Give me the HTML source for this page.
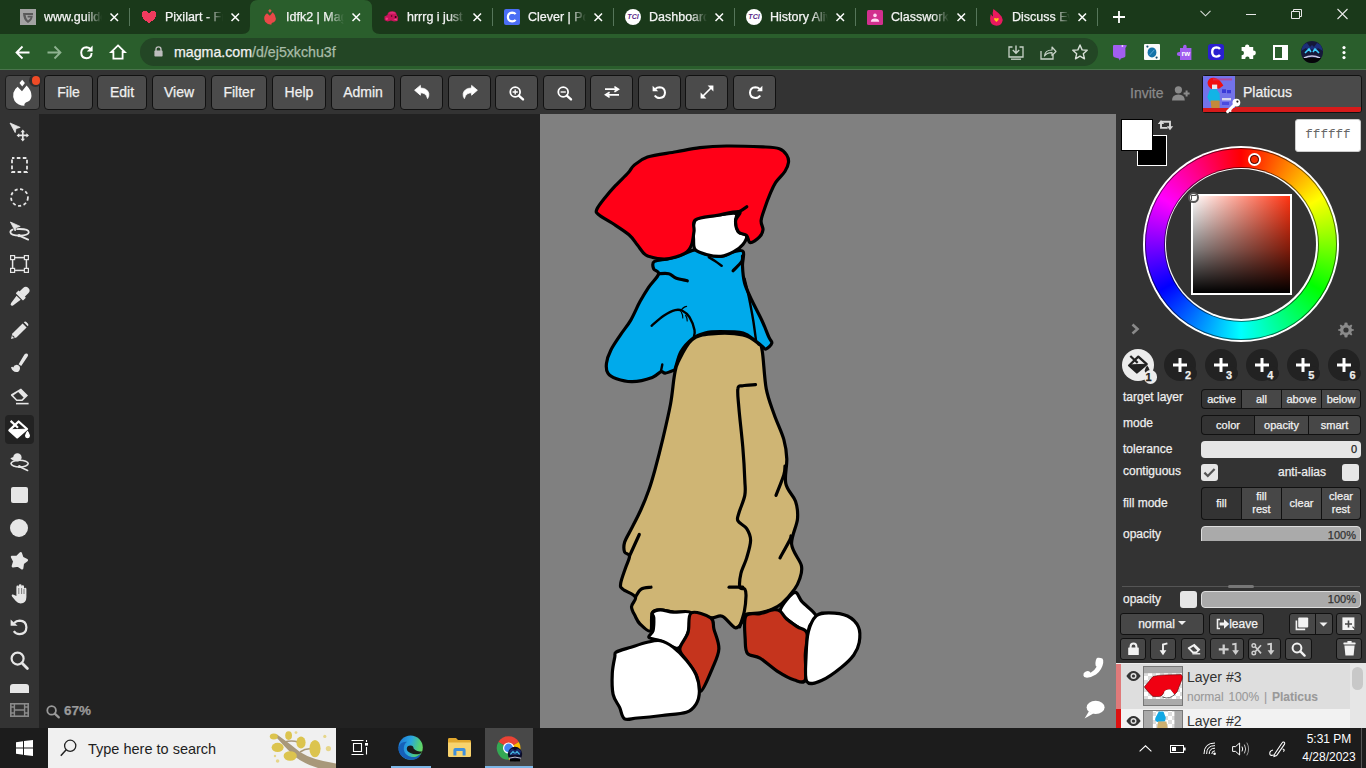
<!DOCTYPE html><html><head><meta charset="utf-8"><style>
*{box-sizing:border-box;margin:0;padding:0}
html,body{width:1366px;height:768px;overflow:hidden;background:#333;font-family:"Liberation Sans",sans-serif;-webkit-text-stroke-width:0.25px}
.a{position:absolute}
svg{position:absolute;overflow:visible}
#tabs{left:0;top:0;width:1366px;height:34px;background:#1a391a}
#tb{left:0;top:34px;width:1366px;height:36px;background:#2a5e2c;border-bottom:1px solid #4a744c}
#omni{left:140px;top:38px;width:958px;height:28px;border-radius:14px;background:#234625}
.tt{position:absolute;top:9px;font-size:12.5px;color:#f4f4f4;white-space:nowrap;overflow:hidden;height:16px;line-height:16px;
 -webkit-mask-image:linear-gradient(90deg,#000 72%,transparent 100%)}
.sep{position:absolute;top:8px;width:1px;height:18px;background:#56765a}
#mtb{left:0;top:70px;width:1366px;height:44px;background:#333}
.btn{position:absolute;top:75px;height:35px;background:#4b4b4b;border:1px solid #111;border-radius:4px;color:#f0f0f0;font-size:14px;line-height:33px;text-align:center}
#left{left:0;top:114px;width:39px;height:614px;background:#333}
#dark{left:39px;top:114px;width:501px;height:614px;background:#222}
#canvas{left:540px;top:114px;width:576px;height:614px;background:#808080;overflow:hidden}
#right{left:1116px;top:114px;width:250px;height:614px;background:#333}
#task{left:0;top:728px;width:1366px;height:40px;background:#1c1c1c}
</style></head><body>
<div id="tabs" class="a"></div>
<svg style="left:242px;top:0" width="138" height="35" viewBox="0 0 138 35"><path d="M0 34 Q8 34 8 26 L8 8 Q8 0 16 0 L122 0 Q130 0 130 8 L130 26 Q130 34 138 34 L138 35 L0 35Z" fill="#2a5e2c"/></svg>
<div class="a" style="left:20px;top:9px"><svg width="16" height="16" viewBox="0 0 16 16"><rect width="16" height="16" fill="#a3a3a3"/><path d="M3 4H13V6H5.6Q6 10 8 11.6Q10 10 10.6 8.6H7.6V6.8H12.8Q12.4 11.6 8 14Q3.2 11.6 3 4Z" fill="#5a5a5a"/></svg></div>
<div class="tt" style="left:44px;width:58px">www.guilded.gg</div>
<svg style="left:110px;top:13px" width="9" height="9"><path d="M0.5 0.5L8 8M8 0.5L0.5 8" stroke="#fff" stroke-width="1.5"/></svg>
<div class="a" style="left:141px;top:10px"><svg width="16" height="14" viewBox="0 0 16 14"><path d="M2 1H6V2H7V3H9V2H10V1H14V2H15V7H14V9H13V10H12V11H10V12H9V13H7V12H6V11H4V10H3V9H2V7H1V2H2Z" fill="#ef3b5e"/></svg></div>
<div class="tt" style="left:165px;width:58px">Pixilart - Free</div>
<svg style="left:231px;top:13px" width="9" height="9"><path d="M0.5 0.5L8 8M8 0.5L0.5 8" stroke="#fff" stroke-width="1.5"/></svg>
<div class="a" style="left:264px;top:9px"><svg width="16" height="16" viewBox="264 9 16 16"><g transform="translate(264 8.9) scale(0.64 0.61) translate(-12.9 -79.8)"><path d="M22.2 79.8L24.9 83L22.2 86.4L19.5 83Z" fill="#e05848"/><path d="M17.6 86.8L22 91.2L26.6 85.4Q31.6 90.4 31.5 96Q31.2 101.4 25.8 102.4Q23.8 103.6 24.4 105.8Q18 105.6 14.6 101Q12.4 97.4 13.4 92.8Q14.6 89 17.6 86.8Z" fill="#ea4848"/></g></svg></div>
<div class="tt" style="left:286px;width:58px">Idfk2 | Magma</div>
<svg style="left:352px;top:13px" width="9" height="9"><path d="M0.5 0.5L8 8M8 0.5L0.5 8" stroke="#fff" stroke-width="1.5"/></svg>
<div class="a" style="left:383px;top:10px"><svg width="16" height="12" viewBox="383 10 16 12"><path d="M387.4 15Q387.6 11.2 392 11.2Q396.4 11.2 396.6 14.6L398.2 17.4L397.6 21L394 21.6L391 20.6L387.6 21.6L384.6 20.2L384.4 16.4Z" fill="#c8145a"/><path d="M388.4 13.4Q390 11.8 392.4 11.8Q395 12 395.8 13.8Z" fill="#e0307a"/><circle cx="391.6" cy="16" r="0.8" fill="#4a0018"/><circle cx="395.6" cy="17" r="1" fill="#2a0010"/><path d="M385.6 18Q387 16.8 388.2 18.4Q387.6 20.4 385.8 19.8Z" fill="#f03a80"/><path d="M393.4 19.8L396.4 18.6L397.2 20.4Z" fill="#e8508a"/></svg></div>
<div class="tt" style="left:407px;width:58px">hrrrg i just want</div>
<svg style="left:473px;top:13px" width="9" height="9"><path d="M0.5 0.5L8 8M8 0.5L0.5 8" stroke="#fff" stroke-width="1.5"/></svg>
<div class="a" style="left:504px;top:9px"><svg width="16" height="16" viewBox="0 0 16 16"><rect width="16" height="16" rx="2" fill="#4b6ef5"/><path d="M11.6 5.2Q10.4 3.6 8.2 3.6Q4 3.8 3.9 8Q4 12.2 8.2 12.4Q10.4 12.4 11.6 10.8" stroke="#fff" stroke-width="2.2" fill="none"/></svg></div>
<div class="tt" style="left:528px;width:58px">Clever | Portal</div>
<svg style="left:594px;top:13px" width="9" height="9"><path d="M0.5 0.5L8 8M8 0.5L0.5 8" stroke="#fff" stroke-width="1.5"/></svg>
<div class="a" style="left:625px;top:9px"><svg width="16" height="16" viewBox="0 0 16 16"><circle cx="8" cy="8" r="8" fill="#fff"/><text x="8" y="10.4" font-family="Liberation Sans" font-size="7" font-weight="bold" font-style="italic" fill="#5a2a8a" text-anchor="middle">TCI</text></svg></div>
<div class="tt" style="left:649px;width:58px">Dashboard</div>
<svg style="left:715px;top:13px" width="9" height="9"><path d="M0.5 0.5L8 8M8 0.5L0.5 8" stroke="#fff" stroke-width="1.5"/></svg>
<div class="a" style="left:746px;top:9px"><svg width="16" height="16" viewBox="0 0 16 16"><circle cx="8" cy="8" r="8" fill="#fff"/><text x="8" y="10.4" font-family="Liberation Sans" font-size="7" font-weight="bold" font-style="italic" fill="#5a2a8a" text-anchor="middle">TCI</text></svg></div>
<div class="tt" style="left:770px;width:58px">History Alive</div>
<svg style="left:836px;top:13px" width="9" height="9"><path d="M0.5 0.5L8 8M8 0.5L0.5 8" stroke="#fff" stroke-width="1.5"/></svg>
<div class="a" style="left:867px;top:10px"><svg width="16" height="15" viewBox="0 0 16 15"><rect width="16" height="15" rx="1.5" fill="#d2308e"/><circle cx="8" cy="5.4" r="1.8" fill="#ffd6f0"/><path d="M3.8 11.8Q4 8.4 8 8.4Q12 8.4 12.2 11.8Z" fill="#ffd6f0"/></svg></div>
<div class="tt" style="left:891px;width:58px">Classwork for</div>
<svg style="left:957px;top:13px" width="9" height="9"><path d="M0.5 0.5L8 8M8 0.5L0.5 8" stroke="#fff" stroke-width="1.5"/></svg>
<div class="a" style="left:990px;top:9px"><svg width="13" height="17" viewBox="0 0 13 17"><path d="M3.4 0Q9 4 11.6 7.6Q13.4 10.6 12 13.6Q10.4 16.8 6.4 16.8Q1.6 16.6 0.4 12.6Q-0.4 9 0.8 5Q2 7 3 7.6Q2.2 3.6 3.4 0Z" fill="#e8195e"/><path d="M6.4 13Q3.6 11 4 9.6Q4.6 8.4 6.4 9.4Q8.2 8.4 8.8 9.6Q9.2 11 6.4 13Z" fill="#ffbf1a"/></svg></div>
<div class="tt" style="left:1012px;width:58px">Discuss Everything</div>
<svg style="left:1078px;top:13px" width="9" height="9"><path d="M0.5 0.5L8 8M8 0.5L0.5 8" stroke="#fff" stroke-width="1.5"/></svg>
<div class="sep" style="left:129px"></div>
<div class="sep" style="left:492px"></div>
<div class="sep" style="left:613px"></div>
<div class="sep" style="left:734px"></div>
<div class="sep" style="left:855px"></div>
<div class="sep" style="left:976px"></div>
<div class="sep" style="left:1097px"></div>
<svg style="left:1113px;top:11px" width="12" height="12"><path d="M6 0V12M0 6H12" stroke="#fff" stroke-width="1.8"/></svg>
<svg style="left:1200px;top:10px" width="11" height="7"><path d="M0.5 0.8L5.5 5.8L10.5 0.8" stroke="#d6dcd6" stroke-width="1.1" fill="none"/></svg>
<div class="a" style="left:1246px;top:14px;width:10px;height:1px;background:#e8e8e8"></div>
<svg style="left:1291px;top:9px" width="11" height="10"><path d="M0.5 2.5H8.5V9.5H0.5Z M2.5 2.5V0.5H10.5V7.5H8.5" stroke="#e8e8e8" stroke-width="1" fill="none"/></svg>
<svg style="left:1337px;top:9px" width="11" height="10"><path d="M0.5 0L10.5 10M10.5 0L0.5 10" stroke="#e8e8e8" stroke-width="1.1"/></svg>
<div id="tb" class="a"></div><div id="omni" class="a"></div>
<svg style="left:15px;top:45px" width="15" height="15"><path d="M14.5 7.5H1.5M7.5 1.5L1.5 7.5L7.5 13.5" stroke="#fff" stroke-width="1.8" fill="none"/></svg>
<svg style="left:47px;top:45px" width="15" height="15"><path d="M0.5 7.5H13.5M7.5 1.5L13.5 7.5L7.5 13.5" stroke="#8fb391" stroke-width="1.8" fill="none"/></svg>
<svg style="left:79px;top:45px" width="15" height="15"><path d="M12.6 8Q12.4 13 7.5 13.2Q2.4 13 2.2 7.6Q2.4 2.4 7.5 2.2Q10.2 2.2 12 4.6" stroke="#fff" stroke-width="1.9" fill="none"/><path d="M13.6 0.6V6.4H7.8Z" fill="#fff"/></svg>
<svg style="left:110px;top:44px" width="16" height="16"><path d="M8 1.4L14.8 8H12.6V14.6H3.4V8H1.2Z" stroke="#fff" stroke-width="1.8" fill="none" stroke-linejoin="miter"/></svg>
<svg style="left:154px;top:46px" width="9" height="11"><path d="M2 5V3.4Q2 0.9 4.5 0.9Q7 0.9 7 3.4V5" stroke="#bdbdbd" stroke-width="1.4" fill="none"/><rect x="0.4" y="4.6" width="8.2" height="6" rx="0.8" fill="#bdbdbd"/></svg>
<div class="a" style="left:174px;top:44px;font-size:14.2px;line-height:17px;color:#f2f2f2;white-space:nowrap">magma.com<span style="color:#a9bca9">/d/ej5xkchu3f</span></div>
<svg style="left:1008px;top:45px" width="16" height="15"><path d="M4.5 2H1V12H15V2H11.5" stroke="#c7d2c7" stroke-width="1.3" fill="none"/><path d="M8 0.5V8M4.8 5L8 8.2L11.2 5" stroke="#c7d2c7" stroke-width="1.4" fill="none"/><path d="M3 14.2H13" stroke="#c7d2c7" stroke-width="1.3"/></svg>
<svg style="left:1040px;top:45px" width="17" height="15"><path d="M1 6V14H13V10" stroke="#c7d2c7" stroke-width="1.3" fill="none"/><path d="M4.5 11Q5 5 12 5V2L16 6.5L12 10.5V7.6Q7 7.4 4.5 11Z" stroke="#c7d2c7" stroke-width="1.2" fill="none" stroke-linejoin="round"/></svg>
<svg style="left:1072px;top:44px" width="16" height="16"><path d="M8 1L10.1 5.9L15.2 6.3L11.3 9.7L12.5 14.8L8 12.1L3.5 14.8L4.7 9.7L0.8 6.3L5.9 5.9Z" stroke="#d8e0d8" stroke-width="1.4" fill="none" stroke-linejoin="round"/></svg>
<svg style="left:1112px;top:43px" width="16" height="18"><path d="M1 3Q1 2 2 2H13L15 2.4L13.4 5V13Q13.4 14.4 12 14.6L8.8 15.6L7.8 17.4L6.8 15.6L3 14.6Q1 14 1 12Z" fill="#a15ef0"/><circle cx="10.4" cy="3" r="0.9" fill="#f6d8ff"/></svg>
<svg style="left:1144px;top:44px" width="16" height="16"><rect width="16" height="16" rx="1" fill="#fafafa"/><ellipse cx="8" cy="8.4" rx="4.4" ry="5" fill="#1572a8"/><path d="M5.6 11L10.4 5.8" stroke="#6fb6e6" stroke-width="0.8"/><circle cx="3.4" cy="2.6" r="1.1" fill="#1a4d6e"/><circle cx="12.6" cy="13.6" r="1.1" fill="#1a4d6e"/></svg>
<svg style="left:1176px;top:44px" width="17" height="16"><path d="M4 4H7Q7 0.6 9.2 0.8Q11 1 10.6 4H15.4V16H4V12Q1 12.4 0.8 10Q1 7.6 4 8Z" fill="#a15ef0"/><text x="9.8" y="12.2" font-family="Liberation Sans" font-size="7.5" font-weight="bold" fill="#fff" text-anchor="middle">rw</text></svg>
<svg style="left:1208px;top:44px" width="16" height="16"><rect width="16" height="16" rx="3" fill="#2a1fd0"/><path d="M12 5Q10.8 3.4 8.4 3.4Q4.2 3.6 4.2 8Q4.2 12.4 8.4 12.6Q10.8 12.6 12 11" stroke="#fff" stroke-width="2.4" fill="none"/></svg>
<svg style="left:1240px;top:44px" width="16" height="16"><path d="M5 3Q5 0.4 7.4 0.6Q9.6 0.8 9.4 3H13.2V6.6Q15.8 6.6 15.8 9Q15.8 11.4 13.2 11.4V15H9.6Q9.6 12.6 7.4 12.6Q5.2 12.6 5.2 15H1.6V11.2Q4 11.2 4 9Q4 6.8 1.6 6.8V3Z" fill="#fff"/></svg>
<svg style="left:1273px;top:45px" width="15" height="15"><rect x="1" y="1" width="13" height="13" stroke="#fff" stroke-width="2" fill="none"/><rect x="9" y="1" width="5" height="13" fill="#fff"/></svg>
<svg style="left:1301px;top:41px" width="22" height="22"><defs><clipPath id="av"><circle cx="11" cy="11" r="11"/></clipPath></defs><g clip-path="url(#av)"><rect width="22" height="22" fill="#15183a"/><path d="M2 4L6 2L9 6L11 4L13 6L16 2L20 4L22 10L17 7L14 10L11 8L8 10L5 7L0 10Z" fill="#1c2f7a"/><path d="M4 12L8 8L10 11M18 12L14 8L12 11" stroke="#3fd0ff" stroke-width="1.6" fill="none"/><path d="M3 17Q11 13 19 17" stroke="#c8c8e8" stroke-width="1.4" fill="none"/><rect y="17" width="22" height="5" fill="#050508"/></g></svg>
<svg style="left:1342px;top:46px" width="4" height="14"><circle cx="2" cy="1.6" r="1.6" fill="#fff"/><circle cx="2" cy="6.6" r="1.6" fill="#fff"/><circle cx="2" cy="11.6" r="1.6" fill="#fff"/></svg>
<div id="mtb" class="a"></div>
<div class="a" style="left:5px;top:75px;width:35px;height:35px;background:#4a4a4a;border:1px solid #1c1c1c;border-radius:4px"></div>
<svg style="left:4px;top:72px" width="42" height="40" viewBox="4 72 42 40"><path d="M22.2 79.8L24.9 83L22.2 86.4L19.5 83Z" fill="#fff"/><path d="M17.6 86.8L22 91.2L26.6 85.4Q31.6 90.4 31.5 96Q31.2 101.4 25.8 102.4Q23.8 103.6 24.4 105.8Q18 105.6 14.6 101Q12.4 97.4 13.4 92.8Q14.6 89 17.6 86.8Z" fill="#fff"/></svg>
<div class="a" style="left:29.4px;top:73.8px;width:13px;height:13px;border-radius:50%;background:#2e2e2e"></div>
<div class="a" style="left:31.6px;top:76px;width:8.6px;height:8.6px;border-radius:50%;background:#ef4b26"></div>
<div class="btn" style="left:44px;width:49px">File</div>
<div class="btn" style="left:97px;width:50px">Edit</div>
<div class="btn" style="left:152px;width:54px">View</div>
<div class="btn" style="left:211px;width:56px">Filter</div>
<div class="btn" style="left:272px;width:54px">Help</div>
<div class="btn" style="left:331px;width:64px">Admin</div>
<div class="btn" style="left:400px;width:43px"></div>
<div class="btn" style="left:448px;width:43px"></div>
<div class="btn" style="left:495px;width:43px"></div>
<div class="btn" style="left:543px;width:43px"></div>
<div class="btn" style="left:590px;width:43px"></div>
<div class="btn" style="left:638px;width:43px"></div>
<div class="btn" style="left:685px;width:43px"></div>
<div class="btn" style="left:733px;width:43px"></div>
<svg style="left:414px;top:85px" width="16" height="14" viewBox="0 0 16 14"><path d="M0.6 5.2L6.4 0.4V3Q13.6 3.2 14.8 8.6Q15.2 11.4 13.6 13.6Q13 10 10.2 8.6Q8.4 7.8 6.4 7.8V10.2Z" fill="#fff" stroke="#fff" stroke-width="0.8" stroke-linejoin="round"/></svg>
<svg style="left:462px;top:85px" width="16" height="14" viewBox="0 0 16 14"><g transform="translate(16 0) scale(-1 1)"><path d="M0.6 5.2L6.4 0.4V3Q13.6 3.2 14.8 8.6Q15.2 11.4 13.6 13.6Q13 10 10.2 8.6Q8.4 7.8 6.4 7.8V10.2Z" fill="#fff" stroke="#fff" stroke-width="0.8" stroke-linejoin="round"/></g></svg>
<svg style="left:509px;top:86px" width="16" height="14" viewBox="0 0 16 14"><circle cx="6.2" cy="6" r="4.9" stroke="#fff" stroke-width="1.8" fill="none"/><path d="M9.8 9.6L14 13.4" stroke="#fff" stroke-width="2.4" stroke-linecap="round"/><path d="M6.2 3.4V8.6M3.6 6H8.8" stroke="#fff" stroke-width="1.4"/></svg>
<svg style="left:557px;top:86px" width="16" height="14" viewBox="0 0 16 14"><circle cx="6.2" cy="6" r="4.9" stroke="#fff" stroke-width="1.8" fill="none"/><path d="M9.8 9.6L14 13.4" stroke="#fff" stroke-width="2.4" stroke-linecap="round"/><path d="M3.6 6H8.8" stroke="#fff" stroke-width="1.4"/></svg>
<svg style="left:604px;top:86px" width="16" height="12" viewBox="0 0 16 12"><path d="M1 3.2H12.6M10.4 0.6L14.4 3.2L10.4 5.8" stroke="#fff" stroke-width="1.7" fill="none"/><path d="M15 8.8H3.4M5.6 6.2L1.6 8.8L5.6 11.4" stroke="#fff" stroke-width="1.7" fill="none"/></svg>
<svg style="left:652px;top:85px" width="15" height="15" viewBox="0 0 15 15"><path d="M3.4 4Q5 2.2 7.6 2.2Q12.8 2.4 13 7.6Q12.8 12.8 7.6 13Q4.4 13 2.8 10.4" stroke="#fff" stroke-width="2" fill="none"/><path d="M0.6 0.8L6.2 6.2H0.6Z" fill="#fff"/></svg>
<svg style="left:700px;top:85px" width="14" height="14" viewBox="0 0 14 14"><path d="M3 11L11 3" stroke="#fff" stroke-width="1.7"/><path d="M7.6 0.6H13.4V6.4Z M0.6 7.6V13.4H6.4Z" fill="#fff"/></svg>
<svg style="left:748px;top:85px" width="15" height="15" viewBox="0 0 15 15"><g transform="translate(15 0) scale(-1 1)"><path d="M3.4 4Q5 2.2 7.6 2.2Q12.8 2.4 13 7.6Q12.8 12.8 7.6 13Q4.4 13 2.8 10.4" stroke="#fff" stroke-width="2" fill="none"/><path d="M0.6 0.8L6.2 6.2H0.6Z" fill="#fff"/></g></svg>
<div id="left" class="a"></div><div id="dark" class="a"></div>
<div class="a" style="left:5px;top:415px;width:29px;height:29px;border-radius:4px;background:#222"></div>
<svg style="left:0;top:0" width="40" height="150" viewBox="0 0 40 150"><path d="M10 123L20.2 127.4L16 128.6L15.2 132.6Z" fill="#e6e6e6" stroke="#e6e6e6" stroke-width="0.8" stroke-linejoin="round"/><path d="M22.8 131.4V139.6M18.2 135.4H27.4" stroke="#e6e6e6" stroke-width="1.7"/><path d="M22.8 129.6L25 132.2H20.6Z M22.8 141.4L25 138.8H20.6Z M16.6 135.4L19.2 133.2V137.6Z M29 135.4L26.4 133.2V137.6Z" fill="#e6e6e6"/></svg>
<svg style="left:11px;top:157px" width="17" height="16" viewBox="0 0 17 16"><rect x="1" y="1" width="15" height="14" stroke="#e6e6e6" stroke-width="1.8" fill="none" stroke-dasharray="3.6 2.4" stroke-dashoffset="1.2"/></svg>
<svg style="left:10px;top:188px" width="19" height="19" viewBox="0 0 19 19"><circle cx="9.5" cy="9.5" r="8.4" stroke="#e6e6e6" stroke-width="1.8" fill="none" stroke-dasharray="3.2 2.5"/></svg>
<svg style="left:0;top:0" width="40" height="250" viewBox="0 0 40 250"><path d="M10.4 222L20.2 226.4L16 227.6L15.2 231Z" fill="#e6e6e6" stroke="#e6e6e6" stroke-width="0.8" stroke-linejoin="round"/><path d="M12.6 229.6Q10.2 230.6 10.4 232.4Q10.8 235.4 19.6 235.6Q28.6 235.4 28.8 232.2Q28.6 229 19.6 229Q18 229 17.2 229.2" stroke="#e6e6e6" stroke-width="1.8" fill="none" stroke-linecap="round"/><circle cx="19.1" cy="235.6" r="1.7" fill="#e6e6e6"/><path d="M19.1 235.6L28.2 239.6" stroke="#e6e6e6" stroke-width="1.7" stroke-linecap="round"/></svg>
<svg style="left:10px;top:255px" width="19" height="18" viewBox="0 0 19 18"><rect x="2.6" y="2.6" width="13.8" height="12.8" stroke="#e6e6e6" stroke-width="1.5" fill="none"/><rect x="0.6" y="0.6" width="4" height="4" fill="#333" stroke="#e6e6e6" stroke-width="1.2"/><rect x="14.4" y="0.6" width="4" height="4" fill="#333" stroke="#e6e6e6" stroke-width="1.2"/><rect x="0.6" y="13.4" width="4" height="4" fill="#333" stroke="#e6e6e6" stroke-width="1.2"/><rect x="14.4" y="13.4" width="4" height="4" fill="#333" stroke="#e6e6e6" stroke-width="1.2"/></svg>
<svg style="left:0;top:0" width="40" height="320" viewBox="0 0 40 320"><g transform="translate(19.6 296.7) rotate(45)"><path d="M-3.7 -3.2V-8.6Q-3.7 -12.4 0 -12.4Q3.7 -12.4 3.7 -8.6V-3.2Z" fill="#e6e6e6"/><rect x="-5.2" y="-3.8" width="10.4" height="4.2" rx="0.8" fill="#e6e6e6"/><path d="M-2.9 1.4H2.9L1.6 10.4Q1.2 12.2 0 12.2Q-1.2 12.2 -1.6 10.4Z" fill="#e6e6e6"/></g></svg>
<svg style="left:10px;top:321px" width="19" height="19" viewBox="0 0 19 19"><path d="M1 18L2.4 12.6L12.6 2.4L16.6 6.4L6.4 16.6Z" fill="#e6e6e6"/><path d="M13.8 1.2Q15.2 -0.2 16.6 1.2L17.8 2.4Q19.2 3.8 17.8 5.2Z" fill="#e6e6e6"/><path d="M2.4 14.6L4.4 16.6" stroke="#333" stroke-width="1.1"/></svg>
<svg style="left:10px;top:353px" width="19" height="20" viewBox="0 0 19 20"><path d="M8.6 11.2L14.4 1.4Q16 -0.2 17.4 0.8Q18.8 2 17.6 3.6L11.2 13Z" fill="#e6e6e6"/><path d="M1 14.6Q2 13 3.2 14.4Q4 12 6.8 11.8Q10.2 12.4 10 15.4Q9.6 19 6.2 19Q2.6 19 1 14.6Z" fill="#e6e6e6"/></svg>
<svg style="left:10px;top:388px" width="19" height="17" viewBox="0 0 19 17"><path d="M11 0.6L18 7.4L12.4 13H6.4L1.2 7.8Q0.4 7 1.2 6.2Z" fill="#e6e6e6"/><path d="M3.2 7.6L7 11.4H11.6L13.6 9.4L8.2 4Z" fill="#333"/><path d="M6 15.6H18.6" stroke="#e6e6e6" stroke-width="1.6"/></svg>
<svg style="left:0;top:0" width="40" height="450" viewBox="0 0 40 450"><path d="M10.6 420.9L18 427.8" stroke="#fff" stroke-width="2.2"/><path d="M18.6 421.5L27 429L17.2 437.4L9.4 430.4Z" stroke="#fff" stroke-width="2.3" stroke-linejoin="round" fill="none"/><path d="M10.4 429.8L25.6 429.2L27 429L17.2 437.4L9.4 430.4Z" fill="#fff" stroke="#fff" stroke-width="1" stroke-linejoin="round"/><path d="M27.5 430.4Q30.2 434.4 30 436Q29.6 438.2 27.5 438.2Q25.4 438.2 25 436Q24.8 434.4 27.5 430.4Z" fill="#fff"/></svg>
<svg style="left:0;top:0" width="40" height="480" viewBox="0 0 40 480"><circle cx="17.4" cy="457.4" r="4.2" fill="#e6e6e6"/><path d="M14 457Q11.6 457.4 10.4 458.4Q12.4 460.4 15.6 461Z" fill="#e6e6e6"/><ellipse cx="19.6" cy="463.6" rx="8.6" ry="3.4" stroke="#e6e6e6" stroke-width="1.6" fill="none"/><path d="M19.2 466.6L27.6 470.4" stroke="#e6e6e6" stroke-width="1.6" stroke-linecap="round"/><circle cx="19.4" cy="466.6" r="1.5" fill="#e6e6e6"/></svg>
<div class="a" style="left:11px;top:487px;width:17px;height:16px;border-radius:2px;background:#e6e6e6"></div>
<div class="a" style="left:10px;top:519px;width:18px;height:18px;border-radius:50%;background:#e6e6e6"></div>
<svg style="left:0;top:0" width="40" height="580" viewBox="0 0 40 580"><path d="M20.62 553.29L22.28 558.02L26.76 560.26L22.77 563.29L22.04 568.25L17.92 565.39L12.97 566.22L14.42 561.42L12.10 556.98L17.11 556.87Z" fill="#e6e6e6" stroke="#e6e6e6" stroke-width="2.6" stroke-linejoin="round"/></svg>
<svg style="left:11px;top:584px" width="18" height="20" viewBox="0 0 18 20"><path d="M5.4 12V3Q5.4 1.6 6.6 1.6Q7.8 1.6 7.8 3V9V1.6Q7.8 0.2 9.2 0.2Q10.6 0.2 10.6 1.6V9V2.6Q10.6 1.2 11.8 1.2Q13 1.2 13 2.6V10V5Q13 3.8 14.2 3.8Q15.4 3.8 15.4 5V13Q15.4 19.4 9.6 19.4Q6.8 19.4 4.8 17L1 12.4Q0.2 11.2 1.2 10.6Q2.2 10 3.2 11Z" fill="#e6e6e6"/><path d="M7.8 4V10M10.6 4V10M13 5V10" stroke="#333" stroke-width="0.6"/></svg>
<svg style="left:10px;top:618px" width="19" height="19" viewBox="0 0 19 19"><path d="M4.2 5Q6.2 2.6 9.6 2.6Q16.2 2.8 16.4 9.4Q16.2 16 9.6 16.2Q5.8 16.2 3.8 13.2" stroke="#e6e6e6" stroke-width="2.2" fill="none"/><path d="M0.6 1.4L7.6 7.8H0.6Z" fill="#e6e6e6"/></svg>
<svg style="left:10px;top:651px" width="19" height="19" viewBox="0 0 19 19"><circle cx="7.6" cy="7.6" r="6" stroke="#e6e6e6" stroke-width="2.2" fill="none"/><path d="M12 12L17.4 17.4" stroke="#e6e6e6" stroke-width="2.8" stroke-linecap="round"/></svg>
<div class="a" style="left:10px;top:684px;width:19px;height:9px;border-radius:3px 3px 0 0;background:#e6e6e6"></div>
<svg style="left:10px;top:703px" width="19" height="14" viewBox="0 0 19 14"><rect x="0.8" y="0.8" width="17.4" height="12.4" stroke="#8a8a8a" stroke-width="1.6" fill="none"/><path d="M4.4 0.8V13.2M14.6 0.8V13.2M4.4 7H14.6M0.8 4H4.4M0.8 10H4.4M14.6 4H18.2M14.6 10H18.2" stroke="#8a8a8a" stroke-width="1.4"/></svg>
<svg style="left:46px;top:705px" width="14" height="13" viewBox="0 0 14 13"><circle cx="5.6" cy="5.4" r="4.3" stroke="#9a9a9a" stroke-width="1.8" fill="none"/><path d="M8.8 8.6L12.8 12.4" stroke="#9a9a9a" stroke-width="2.2" stroke-linecap="round"/></svg>
<div class="a" style="left:64px;top:703px;font-size:13.5px;font-weight:bold;color:#9a9a9a;line-height:16px">67%</div>
<div id="canvas" class="a"></div>
<svg style="left:540px;top:114px" width="576" height="614" viewBox="540 114 576 614"><path d="M654.3 261.5C651.6 263.2 652.9 266.6 653.6 268.7C654.3 270.8 659.4 270.9 658.6 274.0C657.8 277.1 651.7 282.7 648.6 287.3C645.5 291.9 643.0 296.1 640.0 301.6C637.0 307.1 634.0 314.6 630.8 320.1C627.6 325.6 624.1 329.4 620.8 334.4C617.5 339.4 613.2 345.4 610.8 350.2C608.4 355.0 607.0 359.3 606.5 363.1C606.0 366.9 606.2 370.5 607.9 373.1C609.6 375.7 612.5 377.4 616.5 378.8C620.5 380.2 626.2 381.9 632.2 381.7C638.2 381.5 647.5 379.1 652.3 377.4C657.1 375.7 658.8 372.4 660.9 371.7C663.0 371.0 663.1 373.4 665.2 373.1C667.4 372.9 672.1 370.9 673.8 370.2C675.5 369.5 674.0 371.9 675.2 368.8C676.4 365.7 678.1 356.6 681.0 351.6C683.9 346.6 688.4 341.8 692.4 338.7C696.4 335.6 700.4 334.2 705.0 333.0C709.6 331.8 713.8 331.7 720.2 331.7C726.6 331.7 737.5 331.7 743.2 333.1C748.9 334.5 751.5 338.2 754.6 340.3C757.7 342.4 759.9 344.6 761.8 346.0C763.7 347.4 764.3 349.5 766.0 349.0C767.7 348.5 771.3 345.1 771.8 343.2C772.3 341.3 770.7 341.2 769.0 337.4C767.3 333.6 764.7 326.4 761.8 320.2C758.9 314.0 754.7 306.4 751.8 300.2C748.9 294.0 746.1 288.7 744.6 283.0C743.1 277.3 742.7 271.1 742.5 265.8C742.3 260.6 744.7 253.8 743.2 251.5C741.8 249.2 737.5 250.9 733.8 251.7C730.1 252.5 725.6 255.8 721.0 256.3C716.4 256.8 710.6 255.6 706.4 254.5C702.1 253.4 699.1 250.1 695.5 249.9C691.9 249.7 689.1 252.0 684.8 253.4C680.5 254.8 674.6 257.1 669.5 258.5C664.4 259.9 656.9 259.8 654.3 261.5Z" fill="#00aaeb" stroke="#000" stroke-width="3.2" stroke-linejoin="round" stroke-linecap="round"/><path d="M695.5 219.8C699.5 215.6 710.7 216.4 717.4 215.3C724.1 214.2 732.6 212.5 735.6 213.4C738.6 214.3 735.2 217.6 735.6 220.7C736.0 223.8 736.5 229.3 738.3 231.7C740.1 234.1 745.7 233.2 746.5 235.3C747.3 237.4 745.0 241.8 742.9 244.5C740.8 247.2 737.4 249.7 733.8 251.7C730.1 253.7 725.6 255.8 721.0 256.3C716.4 256.8 710.6 255.6 706.4 254.5C702.1 253.4 697.6 252.2 695.5 249.9C693.4 247.6 693.6 245.8 693.6 240.8C693.6 235.8 691.5 224.1 695.5 219.8Z" fill="#fff" stroke="#000" stroke-width="3.2" stroke-linejoin="round" stroke-linecap="round"/><path d="M628.0 173.0C631.1 169.6 630.8 168.1 634.0 165.4C637.2 162.7 640.5 159.3 647.5 157.0C654.5 154.7 667.5 153.4 676.2 151.8C685.0 150.2 691.6 148.6 700.0 147.6C708.4 146.6 716.0 146.1 726.5 146.0C737.0 145.9 754.2 146.5 763.0 146.9C771.8 147.3 775.4 147.3 779.4 148.7C783.4 150.0 785.2 152.7 786.7 155.0C788.2 157.3 788.8 159.7 788.5 162.4C788.2 165.2 787.0 168.2 784.9 171.5C782.8 174.8 778.1 178.8 775.7 182.4C773.3 186.1 772.1 189.1 770.3 193.4C768.5 197.7 766.3 203.4 764.8 208.0C763.3 212.6 761.4 217.0 761.1 220.7C760.8 224.3 763.3 227.2 763.0 229.9C762.7 232.7 761.4 235.1 759.3 237.2C757.2 239.3 752.3 242.9 750.2 242.6C748.1 242.3 748.5 237.3 746.5 235.5C744.5 233.7 740.1 234.2 738.3 231.7C736.5 229.2 735.4 224.0 735.6 220.7C735.8 217.3 742.3 212.5 739.3 211.6C736.3 210.7 724.7 213.9 717.4 215.3C710.1 216.7 699.4 217.1 695.5 219.8C691.6 222.5 694.7 227.2 694.0 231.4C693.3 235.6 693.0 241.3 691.5 245.0C690.0 248.7 688.5 251.2 684.8 253.4C681.1 255.7 674.0 257.6 669.5 258.5C665.0 259.4 661.7 259.1 657.7 258.5C653.8 257.9 649.2 257.2 645.8 255.0C642.4 252.8 640.2 248.4 637.4 245.0C634.6 241.6 633.2 238.5 629.0 234.8C624.8 231.1 617.1 226.4 612.0 223.0C606.9 219.6 601.0 216.8 598.5 214.5C596.0 212.2 595.7 212.2 596.8 209.4C597.9 206.6 602.1 201.4 605.2 197.5C608.3 193.6 611.6 189.8 615.4 185.7C619.2 181.6 624.9 176.4 628.0 173.0Z" fill="#ff0017" stroke="#000" stroke-width="3.2" stroke-linejoin="round" stroke-linecap="round"/><path d="M658.6 273.7C660.3 273.7 665.8 273.0 668.7 273.7C671.6 274.4 672.7 276.8 675.8 278.0C678.9 279.2 685.4 280.3 687.3 280.8" fill="none" stroke="#000" stroke-width="3.2" stroke-linejoin="round" stroke-linecap="round"/><path d="M742.5 256.0C742.4 256.9 743.3 259.0 741.7 261.5C740.1 264.0 734.5 269.2 733.1 270.8" fill="none" stroke="#000" stroke-width="3.2" stroke-linejoin="round" stroke-linecap="round"/><path d="M708.8 257.2C709.8 257.8 712.9 259.6 715.0 261.0C717.1 262.4 720.6 265.0 721.7 265.8" fill="none" stroke="#000" stroke-width="2.4" stroke-linejoin="round" stroke-linecap="round"/><path d="M744.6 278.7C745.3 281.8 747.5 290.4 748.9 297.3C750.3 304.2 752.0 313.0 753.2 320.2C754.4 327.4 755.5 336.9 756.0 340.3" fill="none" stroke="#000" stroke-width="2.4" stroke-linejoin="round" stroke-linecap="round"/><path d="M651.6 325.8C653.6 324.1 659.8 318.4 663.7 315.8C667.6 313.2 672.1 310.9 675.2 310.1C678.3 309.3 680.0 309.6 682.4 310.8C684.8 312.0 687.5 314.0 689.5 317.2C691.5 320.4 693.8 326.8 694.5 330.1C695.2 333.5 693.9 336.1 693.8 337.3" fill="none" stroke="#000" stroke-width="2.4" stroke-linejoin="round" stroke-linecap="round"/><path d="M660.9 371.7C661.1 370.5 662.1 365.7 662.3 364.5" fill="none" stroke="#000" stroke-width="2.4" stroke-linejoin="round" stroke-linecap="round"/><path d="M737.5 212.4Q742 210.6 746.8 206.8" fill="none" stroke="#000" stroke-width="3.2" stroke-linejoin="round" stroke-linecap="round"/><path d="M680.6 311.2Q683 307 686.6 306.4M681.4 312.4Q683 315 682.8 318M685.6 315.4Q687.4 318 687.2 321" fill="none" stroke="#000" stroke-width="1.1" stroke-linecap="round"/><path d="M692.0 339.8C697.5 335.2 703.1 334.7 711.6 333.9C720.1 333.1 735.0 333.3 742.8 334.9C750.6 336.5 755.1 340.9 758.4 343.7C761.6 346.5 761.0 344.0 762.3 351.5C763.6 359.0 764.3 378.2 766.2 388.6C768.2 399.0 771.1 405.5 774.0 414.0C776.9 422.5 781.7 431.9 783.8 439.4C785.9 446.9 786.5 451.5 786.8 458.9C787.1 466.3 784.3 476.6 785.8 483.7C787.2 490.8 793.5 495.4 795.5 501.2C797.5 507.1 798.1 511.6 797.5 518.8C796.9 526.0 791.0 536.4 791.6 544.2C792.2 552.0 800.1 559.8 801.4 565.7C802.7 571.6 800.7 575.5 799.5 579.4C798.3 583.3 797.3 585.4 794.4 589.4C791.5 593.4 785.8 600.0 781.9 603.4C778.0 606.8 774.6 608.1 771.0 609.7C767.4 611.3 764.2 612.0 760.0 612.8C755.8 613.6 748.9 612.9 745.9 614.4C742.9 615.9 743.8 619.8 742.0 622.0C740.2 624.2 738.5 628.7 735.2 627.7C731.9 626.8 726.3 617.9 722.2 616.3C718.1 614.7 716.0 618.4 710.8 617.9C705.6 617.4 697.5 614.0 691.2 613.0C685.0 612.0 678.4 612.7 673.3 612.2C668.1 611.7 663.8 609.7 660.3 609.8C656.8 609.9 653.8 609.5 652.2 613.0C650.6 616.5 652.6 629.1 650.6 630.9C648.6 632.7 642.5 626.4 640.0 624.0C637.5 621.6 636.8 619.4 635.4 616.5C634.0 613.6 631.5 610.0 631.5 606.7C631.5 603.5 636.9 599.9 635.4 597.0C633.9 594.1 625.2 591.4 622.7 589.1C620.2 586.8 620.2 586.9 620.7 583.3C621.2 579.7 624.1 572.2 625.6 567.7C627.1 563.2 629.7 558.6 629.5 556.0C629.3 553.4 625.4 554.3 624.6 552.0C623.8 549.7 623.5 546.2 624.6 542.3C625.8 538.4 628.7 534.1 631.5 528.6C634.3 523.1 638.3 515.5 641.2 509.0C644.2 502.5 646.7 496.0 649.0 489.5C651.3 483.0 652.6 478.4 654.9 470.0C657.2 461.6 660.1 450.4 662.7 439.4C665.3 428.4 668.5 414.9 670.5 404.2C672.5 393.4 673.2 382.0 674.5 374.9C675.8 367.8 675.5 367.1 678.4 361.3C681.3 355.5 686.5 344.4 692.0 339.8Z" fill="#cfb574" stroke="#000" stroke-width="3.2" stroke-linejoin="round" stroke-linecap="round"/><path d="M755.5 384.7C753.4 384.9 745.7 385.0 742.8 385.7C739.9 386.4 738.5 384.9 737.9 388.6C737.2 392.3 738.1 398.3 738.9 408.1C739.7 417.9 741.8 435.2 742.8 447.2C743.8 459.2 744.5 472.0 744.8 480.0C745.1 488.0 745.8 489.9 744.8 495.4C743.8 500.9 740.0 508.8 738.9 513.0C737.8 517.2 736.6 518.2 737.9 520.8C739.2 523.4 744.6 525.4 746.7 528.6C748.8 531.9 750.6 535.4 750.6 540.3C750.6 545.2 748.3 552.4 746.7 557.9C745.1 563.4 742.0 568.6 740.9 573.5C739.8 578.4 739.2 584.6 739.9 587.2C740.5 589.8 743.8 587.6 744.8 589.1C745.8 590.6 746.1 592.4 746.0 596.0C745.9 599.6 745.4 605.9 744.4 611.0C743.4 616.1 740.5 624.2 739.7 626.9" fill="none" stroke="#000" stroke-width="3.2" stroke-linejoin="round" stroke-linecap="round"/><path d="M729.1 587.2C731.4 587.2 740.5 587.2 742.8 587.2" fill="none" stroke="#000" stroke-width="3.2" stroke-linejoin="round" stroke-linecap="round"/><path d="M639.3 534.5C637.7 538.1 631.1 552.4 629.5 556.0" fill="none" stroke="#000" stroke-width="3.2" stroke-linejoin="round" stroke-linecap="round"/><path d="M635.4 597.0C636.4 595.7 638.6 590.7 641.2 589.1C643.9 587.5 649.4 587.5 651.0 587.2" fill="none" stroke="#000" stroke-width="3.2" stroke-linejoin="round" stroke-linecap="round"/><path d="M785.0 466.0C784.8 467.5 785.3 470.1 783.8 475.0C782.3 479.9 777.3 492.0 776.0 495.4" fill="none" stroke="#000" stroke-width="3.2" stroke-linejoin="round" stroke-linecap="round"/><path d="M791.0 536.0C790.8 536.7 791.5 536.6 789.7 540.3C787.9 543.9 781.6 555.0 780.0 557.9" fill="none" stroke="#000" stroke-width="3.2" stroke-linejoin="round" stroke-linecap="round"/><path d="M652.2 613.0C653.3 611.6 656.8 609.9 660.3 609.8C663.8 609.7 668.1 611.7 673.3 612.2C678.4 612.7 688.8 609.6 691.2 613.0C693.7 616.4 689.9 626.8 688.0 632.5C686.1 638.2 682.2 644.8 679.8 647.2C677.3 649.7 676.5 648.3 673.3 647.2C670.0 646.1 664.4 642.3 660.3 640.7C656.2 639.1 650.1 639.0 648.9 637.4C647.7 635.8 652.2 634.1 653.0 630.9C653.8 627.6 653.9 620.9 653.8 617.9C653.7 614.9 651.1 614.4 652.2 613.0Z" fill="#fff" stroke="#000" stroke-width="3.2" stroke-linejoin="round" stroke-linecap="round"/><path d="M691.2 613.0C695.0 610.6 707.0 615.2 710.8 617.9C714.6 620.6 712.6 624.1 714.0 629.3C715.4 634.4 719.2 642.3 718.9 648.8C718.6 655.3 715.4 661.2 712.4 668.3C709.4 675.3 703.7 690.0 701.0 691.1C698.3 692.2 698.5 679.9 696.1 674.8C693.7 669.6 689.1 664.5 686.4 660.2C683.7 655.9 679.5 653.4 679.8 648.8C680.1 644.2 686.1 638.5 688.0 632.5C689.9 626.5 687.4 615.4 691.2 613.0Z" fill="#c5341d" stroke="#000" stroke-width="3.2" stroke-linejoin="round" stroke-linecap="round"/><path d="M616.4 652.0C619.1 650.4 625.9 648.8 631.0 647.2C636.1 645.6 642.4 643.4 647.3 642.3C652.2 641.2 656.0 639.9 660.3 640.7C664.6 641.5 668.9 644.0 673.3 647.2C677.6 650.5 682.6 655.6 686.4 660.2C690.2 664.8 693.9 669.6 696.1 674.8C698.3 679.9 699.4 686.2 699.4 691.1C699.4 696.0 698.3 700.6 696.1 704.1C693.9 707.6 692.1 710.4 686.4 712.3C680.7 714.2 670.1 714.5 662.0 715.5C653.9 716.5 643.8 717.5 637.5 718.0C631.2 718.5 627.5 720.6 624.5 718.8C621.5 717.0 621.5 711.5 619.6 707.4C617.7 703.3 614.3 700.1 613.1 694.4C611.9 688.7 612.0 679.4 612.3 673.2C612.6 667.0 614.1 660.5 614.8 657.0C615.5 653.5 613.7 653.6 616.4 652.0Z" fill="#fff" stroke="#000" stroke-width="3.2" stroke-linejoin="round" stroke-linecap="round"/><path d="M780.3 609.7C781.6 605.3 790.8 593.8 794.4 592.5C798.0 591.2 798.6 598.0 802.2 601.9C805.8 605.8 815.0 612.0 816.2 615.9C817.5 619.8 811.6 622.4 810.0 625.3C808.4 628.2 809.0 632.8 806.9 633.1C804.8 633.4 800.9 629.2 797.5 626.9C794.1 624.5 789.5 621.9 786.6 619.0C783.7 616.1 779.0 614.1 780.3 609.7Z" fill="#fff" stroke="#000" stroke-width="3.2" stroke-linejoin="round" stroke-linecap="round"/><path d="M745.9 616.0C748.4 611.7 755.3 614.6 760.0 613.6C764.7 612.6 770.6 610.1 774.0 609.7C777.4 609.3 778.2 609.7 780.3 611.2C782.4 612.8 783.7 616.4 786.6 619.0C789.5 621.6 794.1 624.5 797.5 626.9C800.9 629.2 805.6 628.4 806.9 633.1C808.2 637.8 805.6 647.2 805.3 655.0C805.0 662.8 807.1 675.8 805.3 680.0C803.5 684.2 798.8 681.3 794.4 680.0C790.0 678.7 784.5 675.9 778.8 672.2C773.0 668.6 765.2 661.2 760.0 658.1C754.8 655.0 750.0 656.5 747.5 653.4C745.0 650.3 745.5 645.6 745.2 639.4C744.9 633.2 743.4 620.3 745.9 616.0Z" fill="#c5341d" stroke="#000" stroke-width="3.2" stroke-linejoin="round" stroke-linecap="round"/><path d="M816.2 615.9C819.6 612.8 823.5 612.8 828.8 612.8C834.0 612.8 842.6 613.6 847.5 616.0C852.4 618.4 856.4 622.5 858.4 626.9C860.4 631.3 860.0 637.8 859.2 642.5C858.4 647.2 856.7 650.8 853.8 655.0C850.8 659.2 846.5 663.3 841.2 667.5C836.0 671.7 828.2 677.6 822.5 680.0C816.8 682.4 809.6 685.8 806.9 681.6C804.2 677.4 805.9 663.3 806.1 655.0C806.4 646.7 806.7 638.1 808.4 631.6C810.1 625.1 812.9 619.0 816.2 615.9Z" fill="#fff" stroke="#000" stroke-width="3.2" stroke-linejoin="round" stroke-linecap="round"/></svg>
<div id="right" class="a"></div>
<div class="a" style="left:1116px;top:70px;width:250px;height:44px;background:#333"></div>
<div class="a" style="left:1130px;top:85px;font-size:14px;line-height:17px;color:#8a8a8a">Invite</div>
<svg style="left:1172px;top:86px" width="18" height="15" viewBox="0 0 18 15"><circle cx="6.4" cy="3.8" r="3.6" fill="#8a8a8a"/><path d="M0 14.6Q0 8.4 6.4 8.4Q12.8 8.4 12.8 14.6Z" fill="#8a8a8a"/><path d="M14.6 4.4V10.4M11.6 7.4H17.6" stroke="#8a8a8a" stroke-width="2"/></svg>
<div class="a" style="left:1202px;top:75px;width:160px;height:38px;background:#4a4a4a;border:1px solid #111;border-radius:3px;overflow:hidden"><div class="a" style="left:0;bottom:0;width:160px;height:5px;background:#d71a1a"></div></div>
<svg style="left:0;top:0" width="1366" height="120" viewBox="0 0 1366 120"><rect x="1203" y="76" width="32" height="32" fill="#7373ea"/><path d="M1207.6 82Q1209 77.4 1214 77.8Q1219.6 78.6 1223.4 85.6L1219 88.8L1214.6 87.4L1211.6 89Q1207.2 86.4 1207.6 82Z" fill="#f01010"/><rect x="1212" y="84.6" width="5.2" height="4.4" fill="#e8e8f0"/><path d="M1210 89.6L1216.4 89L1219.6 93.6L1220 101L1209.4 101.4L1207.2 97Z" fill="#12b4e6"/><path d="M1210.6 100.6H1219.6V108H1211.4Z" fill="#c48a3a"/><path d="M1222 89.2H1226V93H1222Z M1227 90H1231V93.2H1227Z" fill="#3a3ad8"/><rect x="1222" y="98" width="9" height="2.4" fill="#d8d8f0"/><rect x="1222" y="102" width="7" height="3" fill="#4a4ae0"/><path d="M1213 78.4H1232V80.4H1213Z" fill="#d8306a" opacity="0.6"/><rect x="1203" y="108" width="32" height="4" fill="#d71a1a"/><circle cx="1236.4" cy="102.6" r="3.9" fill="#fff"/><path d="M1234.6 104.6L1227.6 111.6" stroke="#fff" stroke-width="3" stroke-linecap="round"/><path d="M1229.4 109.8L1231.2 111.6" stroke="#fff" stroke-width="1.6"/><circle cx="1237.4" cy="101.6" r="1.1" fill="#222"/></svg>
<div class="a" style="left:1243px;top:84px;font-size:14px;line-height:17px;color:#f0f0f0">Platicus</div>
<div class="a" style="left:1137px;top:135px;width:30px;height:31px;background:#000;border:1px solid #fff"></div>
<div class="a" style="left:1121px;top:119px;width:32px;height:32px;background:#fff;border:1px solid #000"></div>
<svg style="left:0;top:0" width="1366" height="140" viewBox="0 0 1366 140"><path d="M1161 122.6V127.9H1167.6M1161.3 121.8H1170V127.4" stroke="#d8d8d8" stroke-width="1.9" fill="none"/><path d="M1157.8 124L1161 120L1164.2 124Z M1166.8 126.2L1170 130.2L1173.2 126.2Z" fill="#d8d8d8"/></svg>
<div class="a" style="left:1295px;top:119px;width:66px;height:33px;background:#fff;border:1px solid #ccc;border-radius:3px;font-family:'Liberation Mono',monospace;font-size:12.6px;line-height:31px;color:#666;-webkit-text-stroke-width:0;text-align:center;letter-spacing:0px">ffffff</div>
<div class="a" style="left:1143px;top:146px;width:196px;height:196px;border-radius:50%;background:#fff"></div>
<div class="a" style="left:1145px;top:148px;width:192px;height:192px;border-radius:50%;background:conic-gradient(from 0deg,#f00,#ff0,#0f0,#0ff,#00f,#f0f,#f00);box-shadow:inset 0 0 0 1px rgba(0,0,0,.55)"></div>
<div class="a" style="left:1164.5px;top:167.5px;width:153px;height:153px;border-radius:50%;background:#fff;box-shadow:0 0 0 1px rgba(0,0,0,.55)"></div>
<div class="a" style="left:1166px;top:169px;width:150px;height:150px;border-radius:50%;background:#333"></div>
<div class="a" style="left:1191px;top:194px;width:101px;height:101px;background:#fff"></div>
<div class="a" style="left:1193px;top:196px;width:97px;height:97px;background:linear-gradient(to bottom,rgba(0,0,0,0),rgba(0,0,0,.22) 25%,rgba(0,0,0,.5) 55%,rgba(0,0,0,.8) 82%,#000),linear-gradient(to right,#fff,#ff3412)"></div>
<div class="a" style="left:1248px;top:153px;width:13px;height:13px;border-radius:50%;background:#fff"></div><div class="a" style="left:1250.4px;top:155.4px;width:8.2px;height:8.2px;border-radius:50%;background:#f52a00;border:1.2px solid #3a0000"></div>
<div class="a" style="left:1188px;top:192px;width:11px;height:11px;border-radius:50%;background:#fff;border:2px solid #555"></div>
<div class="a" style="left:1191px;top:195px;width:5px;height:5px;background:#fff;border-left:1px solid #555;border-top:1px solid #555"></div>
<svg style="left:1131px;top:323px" width="9" height="12" viewBox="0 0 9 12"><path d="M1.5 1.5L6.5 6L1.5 10.5" stroke="#8a8a8a" stroke-width="2.6" fill="none"/></svg>
<svg style="left:1338px;top:322px" width="16" height="16" viewBox="0 0 16 16"><path d="M8 0.6L9.4 0.8L9.8 3L11.4 3.7L13.2 2.4L14.3 3.5L13.3 5.4L13.9 7L16 7.4V8.6L13.9 9L13.3 10.6L14.3 12.5L13.2 13.6L11.4 12.3L9.8 13L9.4 15.2L8 15.4L6.6 15.2L6.2 13L4.6 12.3L2.8 13.6L1.7 12.5L2.7 10.6L2.1 9L0 8.6V7.4L2.1 7L2.7 5.4L1.7 3.5L2.8 2.4L4.6 3.7L6.2 3L6.6 0.8Z" fill="#8a8a8a"/><circle cx="8" cy="8" r="2.6" fill="#333"/></svg>
<div class="a" style="left:1122px;top:349px;width:32px;height:32px;border-radius:50%;background:#ececec"></div>
<svg style="left:0;top:0" width="1366" height="400" viewBox="0 0 1366 400"><g transform="translate(1119.7 -64.9)"><path d="M10.6 420.9L18 427.8" stroke="#222" stroke-width="2.2"/><path d="M18.6 421.5L27 429L17.2 437.4L9.4 430.4Z" stroke="#222" stroke-width="2.3" stroke-linejoin="round" fill="none"/><path d="M10.4 429.8L25.6 429.2L27 429L17.2 437.4L9.4 430.4Z" fill="#222" stroke="#222" stroke-width="1" stroke-linejoin="round"/><path d="M27.5 430.4Q30.2 434.4 30 436Q29.6 438.2 27.5 438.2Q25.4 438.2 25 436Q24.8 434.4 27.5 430.4Z" fill="#222"/></g></svg>
<div class="a" style="left:1143.5px;top:370px;width:13.6px;height:13.6px;border-radius:50%;background:#ececec"></div>
<div class="a" style="left:1145.6px;top:370.6px;font-size:11px;font-weight:bold;line-height:12px;color:#222">1</div>
<div class="a" style="left:1163.6px;top:349px;width:32px;height:32px;border-radius:50%;background:#222"></div>
<div class="a" style="left:1181.6px;top:366px;width:15px;height:15px;border-radius:50%;background:#222"></div>
<svg style="left:1171.6px;top:357px" width="16" height="16" viewBox="0 0 16 16"><path d="M8 1V15M1 8H15" stroke="#fff" stroke-width="3"/></svg>
<div class="a" style="left:1185.0px;top:369px;font-size:11px;font-weight:bold;line-height:13px;color:#eee">2</div>
<div class="a" style="left:1204.7px;top:349px;width:32px;height:32px;border-radius:50%;background:#222"></div>
<div class="a" style="left:1222.7px;top:366px;width:15px;height:15px;border-radius:50%;background:#222"></div>
<svg style="left:1212.7px;top:357px" width="16" height="16" viewBox="0 0 16 16"><path d="M8 1V15M1 8H15" stroke="#fff" stroke-width="3"/></svg>
<div class="a" style="left:1226.1px;top:369px;font-size:11px;font-weight:bold;line-height:13px;color:#eee">3</div>
<div class="a" style="left:1245.8px;top:349px;width:32px;height:32px;border-radius:50%;background:#222"></div>
<div class="a" style="left:1263.8px;top:366px;width:15px;height:15px;border-radius:50%;background:#222"></div>
<svg style="left:1253.8px;top:357px" width="16" height="16" viewBox="0 0 16 16"><path d="M8 1V15M1 8H15" stroke="#fff" stroke-width="3"/></svg>
<div class="a" style="left:1267.2px;top:369px;font-size:11px;font-weight:bold;line-height:13px;color:#eee">4</div>
<div class="a" style="left:1286.9px;top:349px;width:32px;height:32px;border-radius:50%;background:#222"></div>
<div class="a" style="left:1304.9px;top:366px;width:15px;height:15px;border-radius:50%;background:#222"></div>
<svg style="left:1294.9px;top:357px" width="16" height="16" viewBox="0 0 16 16"><path d="M8 1V15M1 8H15" stroke="#fff" stroke-width="3"/></svg>
<div class="a" style="left:1308.3px;top:369px;font-size:11px;font-weight:bold;line-height:13px;color:#eee">5</div>
<div class="a" style="left:1328.0px;top:349px;width:32px;height:32px;border-radius:50%;background:#222"></div>
<div class="a" style="left:1346.0px;top:366px;width:15px;height:15px;border-radius:50%;background:#222"></div>
<svg style="left:1336.0px;top:357px" width="16" height="16" viewBox="0 0 16 16"><path d="M8 1V15M1 8H15" stroke="#fff" stroke-width="3"/></svg>
<div class="a" style="left:1349.4px;top:369px;font-size:11px;font-weight:bold;line-height:13px;color:#eee">6</div>
<div class="a" style="left:1123px;top:390px;font-size:12px;line-height:14px;color:#eeeeee">target layer</div>
<div class="a" style="left:1123px;top:416px;font-size:12px;line-height:14px;color:#eeeeee">mode</div>
<div class="a" style="left:1123px;top:442px;font-size:12px;line-height:14px;color:#eeeeee">tolerance</div>
<div class="a" style="left:1123px;top:464px;font-size:12px;line-height:14px;color:#eeeeee">contiguous</div>
<div class="a" style="left:1123px;top:496px;font-size:12px;line-height:14px;color:#eeeeee">fill mode</div>
<div class="a" style="left:1123px;top:527px;font-size:12px;line-height:14px;color:#eeeeee">opacity</div>
<div class="a" style="left:1201px;top:389px;width:160px;height:20px;background:#111;border-radius:4px"></div>
<div class="a" style="left:1202px;top:390px;width:39px;height:18px;background:#333;border-radius:3px 0 0 3px;font-size:11px;color:#f2f2f2;text-align:center;line-height:18px">active</div>
<div class="a" style="left:1242px;top:390px;width:39px;height:18px;background:#474747;font-size:11px;color:#f2f2f2;text-align:center;line-height:18px">all</div>
<div class="a" style="left:1282px;top:390px;width:39px;height:18px;background:#474747;font-size:11px;color:#f2f2f2;text-align:center;line-height:18px">above</div>
<div class="a" style="left:1322px;top:390px;width:38px;height:18px;background:#474747;border-radius:0 3px 3px 0;font-size:11px;color:#f2f2f2;text-align:center;line-height:18px">below</div>
<div class="a" style="left:1201px;top:415px;width:160px;height:20px;background:#111;border-radius:4px"></div>
<div class="a" style="left:1202px;top:416px;width:52px;height:18px;background:#333;border-radius:3px 0 0 3px;font-size:11px;color:#f2f2f2;text-align:center;line-height:18px">color</div>
<div class="a" style="left:1255px;top:416px;width:53px;height:18px;background:#474747;font-size:11px;color:#f2f2f2;text-align:center;line-height:18px">opacity</div>
<div class="a" style="left:1309px;top:416px;width:51px;height:18px;background:#474747;border-radius:0 3px 3px 0;font-size:11px;color:#f2f2f2;text-align:center;line-height:18px">smart</div>
<div class="a" style="left:1201px;top:487px;width:160px;height:33px;background:#111;border-radius:4px"></div>
<div class="a" style="left:1202px;top:488px;width:39px;height:31px;background:#333;border-radius:3px 0 0 3px;font-size:11px;color:#f2f2f2;text-align:center;line-height:31px">fill</div>
<div class="a" style="left:1242px;top:488px;width:39px;height:31px;background:#474747;font-size:11px;color:#f2f2f2;text-align:center;line-height:13px;padding-top:2px">fill<br>rest</div>
<div class="a" style="left:1282px;top:488px;width:39px;height:31px;background:#474747;font-size:11px;color:#f2f2f2;text-align:center;line-height:31px">clear</div>
<div class="a" style="left:1322px;top:488px;width:38px;height:31px;background:#474747;border-radius:0 3px 3px 0;font-size:11px;color:#f2f2f2;text-align:center;line-height:13px;padding-top:2px">clear<br>rest</div>
<div class="a" style="left:1201px;top:441px;width:160px;height:17px;background:#e6e6e6;border-radius:4px;font-size:11px;line-height:17px;color:#222;text-align:right;padding-right:4px">0</div>
<div class="a" style="left:1201px;top:464px;width:17px;height:17px;background:#e6e6e6;border-radius:3px"></div>
<svg style="left:1203px;top:467px" width="13" height="11" viewBox="0 0 13 11"><path d="M1.4 5.6L4.8 9L11.6 2" stroke="#555" stroke-width="2.2" fill="none"/></svg>
<div class="a" style="left:1278px;top:464px;font-size:12px;line-height:16px;color:#eeeeee">anti-alias</div>
<div class="a" style="left:1342px;top:464px;width:17px;height:17px;background:#e6e6e6;border-radius:3px"></div>
<div class="a" style="left:1116px;top:526px;width:250px;height:15px;overflow:hidden"><div class="a" style="left:85px;top:0;width:160px;height:20px;background:#aaa;border:1px solid #ddd;border-radius:4px;font-size:11px;line-height:16px;color:#333;text-align:right;padding-right:4px">100%</div></div>
<div class="a" style="left:1122px;top:586px;width:238px;height:1px;background:#555"></div>
<div class="a" style="left:1228px;top:585px;width:26px;height:3px;border-radius:2px;background:#777"></div>
<div class="a" style="left:1123px;top:592px;font-size:12px;line-height:14px;color:#eeeeee">opacity</div>
<div class="a" style="left:1180px;top:591px;width:17px;height:17px;background:#e6e6e6;border-radius:3px"></div>
<div class="a" style="left:1201px;top:591px;width:160px;height:17px;background:#aaa;border:1px solid #ddd;border-radius:4px;font-size:11px;line-height:15px;color:#333;text-align:right;padding-right:4px">100%</div>
<div class="a" style="left:1120px;top:613px;width:84px;height:22px;background:#474747;border:1px solid #111;border-radius:3px;color:#f2f2f2;font-size:12px;text-align:center;line-height:20px">normal<span style="display:inline-block;margin-left:3px;vertical-align:middle;border-left:4px solid transparent;border-right:4px solid transparent;border-top:4px solid #eee;position:relative;top:-2px"></span></div>
<div class="a" style="left:1209px;top:613px;width:55px;height:22px;background:#474747;border:1px solid #111;border-radius:3px;color:#f2f2f2;font-size:12px;text-align:center;line-height:20px"><span style="padding-left:14px">leave</span></div>
<svg style="left:1216px;top:618px" width="14" height="12" viewBox="0 0 14 12"><path d="M4 1.5H1.5V10.5H4" stroke="#f2f2f2" stroke-width="1.6" fill="none"/><path d="M3.6 4.4H8V1.2L13.2 6L8 10.8V7.6H3.6Z" fill="#f2f2f2"/></svg>
<div class="a" style="left:1289px;top:613px;width:44px;height:22px;background:#474747;border:1px solid #111;border-radius:3px;color:#f2f2f2;font-size:12px;text-align:center;line-height:20px"></div>
<div class="a" style="left:1315px;top:614px;width:1px;height:20px;background:#111"></div>
<svg style="left:1294px;top:617px" width="15" height="14" viewBox="0 0 15 14"><rect x="4.2" y="0.6" width="10" height="10" rx="1" fill="#f2f2f2"/><path d="M2.4 3.6V12.4H11.2" stroke="#f2f2f2" stroke-width="1.6" fill="none"/></svg>
<svg style="left:1319px;top:622px" width="9" height="5" viewBox="0 0 9 5"><path d="M0.5 0.5H8.5L4.5 4.5Z" fill="#f2f2f2"/></svg>
<div class="a" style="left:1336px;top:613px;width:26px;height:22px;background:#474747;border:1px solid #111;border-radius:3px;color:#f2f2f2;font-size:12px;text-align:center;line-height:20px"></div>
<svg style="left:1342px;top:617px" width="15" height="14" viewBox="0 0 15 14"><rect x="0.4" y="0.4" width="12" height="12.6" fill="#f2f2f2"/><path d="M3 7H10M6.5 3.6V10.4" stroke="#474747" stroke-width="1.6"/><path d="M10.5 9.6L14 13.4" stroke="#474747" stroke-width="1.2"/></svg>
<div class="a" style="left:1120px;top:638px;width:26px;height:22px;background:#474747;border:1px solid #111;border-radius:3px;color:#f2f2f2;font-size:12px;text-align:center;line-height:20px"></div>
<div class="a" style="left:1150px;top:638px;width:26px;height:22px;background:#474747;border:1px solid #111;border-radius:3px;color:#f2f2f2;font-size:12px;text-align:center;line-height:20px"></div>
<div class="a" style="left:1181px;top:638px;width:25px;height:22px;background:#474747;border:1px solid #111;border-radius:3px;color:#f2f2f2;font-size:12px;text-align:center;line-height:20px"></div>
<div class="a" style="left:1210px;top:638px;width:34px;height:22px;background:#474747;border:1px solid #111;border-radius:3px;color:#f2f2f2;font-size:12px;text-align:center;line-height:20px"></div>
<div class="a" style="left:1248px;top:638px;width:33px;height:22px;background:#474747;border:1px solid #111;border-radius:3px;color:#f2f2f2;font-size:12px;text-align:center;line-height:20px"></div>
<div class="a" style="left:1285px;top:638px;width:27px;height:22px;background:#474747;border:1px solid #111;border-radius:3px;color:#f2f2f2;font-size:12px;text-align:center;line-height:20px"></div>
<div class="a" style="left:1336px;top:638px;width:26px;height:22px;background:#474747;border:1px solid #111;border-radius:3px;color:#f2f2f2;font-size:12px;text-align:center;line-height:20px"></div>
<svg style="left:0;top:0" width="1366" height="700" viewBox="0 0 1366 700"><path d="M1130.6 648V646.4Q1130.6 643.4 1133.5 643.4Q1136.4 643.4 1136.4 646.4V648" stroke="#f2f2f2" stroke-width="2" fill="none"/><rect x="1128.2" y="647.4" width="10.6" height="7.6" rx="0.6" fill="#f2f2f2"/></svg>
<svg style="left:0;top:0" width="1366" height="700" viewBox="0 0 1366 700"><path d="M1167.4 643.4L1163 644.6V651.4" stroke="#f2f2f2" stroke-width="1.9" fill="none"/><path d="M1159.6 650.2H1166.4L1163 655.2Z" fill="#f2f2f2"/></svg>
<svg style="left:0;top:0" width="1366" height="700" viewBox="0 0 1366 700"><path d="M1194.4 643.8L1200.4 649.6L1196.8 653.2H1192.4L1188 648.8Q1187.4 648.2 1188 647.6Z" fill="#f2f2f2"/><path d="M1190.2 648.4L1193.4 651.6H1196L1197.2 650.4L1193.4 646.6Z" fill="#474747"/><path d="M1192.4 653.8H1200.2" stroke="#f2f2f2" stroke-width="1.3"/></svg>
<svg style="left:0;top:0" width="1366" height="700" viewBox="0 0 1366 700"><path d="M1223.7 644.4V654.2M1218.8 649.3H1228.6" stroke="#cfcfcf" stroke-width="2.3"/><path d="M1232.2 644.4L1235.6 643.8V651.4" stroke="#cfcfcf" stroke-width="1.9" fill="none"/><path d="M1232.2 650.2H1239L1235.6 655Z" fill="#cfcfcf"/></svg>
<svg style="left:0;top:0" width="1366" height="700" viewBox="0 0 1366 700"><circle cx="1253.8" cy="645.6" r="1.8" stroke="#cfcfcf" stroke-width="1.4" fill="none"/><circle cx="1253.8" cy="653" r="1.8" stroke="#cfcfcf" stroke-width="1.4" fill="none"/><path d="M1255.2 646.8L1261 653.4M1255.2 651.8L1261 645.2" stroke="#cfcfcf" stroke-width="1.7"/><path d="M1267.4 644.4L1271 643.8V651.4" stroke="#cfcfcf" stroke-width="1.9" fill="none"/><path d="M1267.6 650.2H1274.4L1271 655Z" fill="#cfcfcf"/></svg>
<svg style="left:1291px;top:642px" width="15" height="15" viewBox="0 0 15 15"><circle cx="6" cy="6" r="4.4" stroke="#f2f2f2" stroke-width="2" fill="none"/><path d="M9.4 9.4L13.6 13.6" stroke="#f2f2f2" stroke-width="2.4" stroke-linecap="round"/></svg>
<svg style="left:1343px;top:641px" width="13" height="15" viewBox="0 0 13 15"><rect x="0.4" y="1.4" width="12.2" height="2" rx="0.6" fill="#f2f2f2"/><rect x="4.4" y="0" width="4.2" height="2" fill="#f2f2f2"/><path d="M1.4 4.4H11.6L10.6 14.6H2.4Z" fill="#f2f2f2"/></svg>
<div class="a" style="left:1116px;top:663px;width:250px;height:65px;background:#ececec;overflow:hidden"><div class="a" style="left:0;top:1px;width:234px;height:45px;background:#dedede"></div><div class="a" style="left:0;top:1px;width:5px;height:45px;background:#e07a7a"></div><div class="a" style="left:0;top:46px;width:5px;height:20px;background:#dd1111"></div><div class="a" style="left:5px;top:46px;width:229px;height:20px;background:#f2f2f2"></div><div class="a" style="left:234px;top:0;width:16px;height:65px;background:#e6e6e6"></div><div class="a" style="left:236px;top:4px;width:11px;height:23px;border-radius:6px;background:#c8c8c8"></div></div>
<svg style="left:1126px;top:671px" width="15" height="10" viewBox="0 0 15 10"><path d="M0.4 5Q3.6 0 7.5 0Q11.4 0 14.6 5Q11.4 10 7.5 10Q3.6 10 0.4 5Z" fill="#333"/><circle cx="7.5" cy="5" r="3" fill="#dedede"/><circle cx="7.5" cy="5" r="1.6" fill="#333"/></svg>
<svg style="left:1126px;top:716px" width="15" height="10" viewBox="0 0 15 10"><path d="M0.4 5Q3.6 0 7.5 0Q11.4 0 14.6 5Q11.4 10 7.5 10Q3.6 10 0.4 5Z" fill="#333"/><circle cx="7.5" cy="5" r="3" fill="#dedede"/><circle cx="7.5" cy="5" r="1.6" fill="#333"/></svg>
<svg style="left:0;top:0" width="1366" height="768" viewBox="0 0 1366 768"><defs><pattern id="chk" x="0" y="0" width="8" height="8" patternUnits="userSpaceOnUse"><rect width="8" height="8" fill="#fff"/><rect width="4" height="4" fill="#ddd"/><rect x="4" y="4" width="4" height="4" fill="#ddd"/></pattern><clipPath id="tc2"><rect x="1143" y="710" width="40" height="18"/></clipPath></defs><rect x="1143.5" y="666.5" width="39" height="39" fill="#aaa" stroke="#777" stroke-width="1"/><rect x="1144" y="673.2" width="38" height="25.8" fill="url(#chk)"/><path d="M1144.3 686.9L1152.9 676.6Q1158 675 1165.8 674.9L1181.2 674.6Q1183 676 1182.1 679.2L1178.6 688L1177 692L1174.4 694.6Q1172 692 1170.4 689.6Q1166 689 1164.4 691.6Q1162.6 696 1159.6 696.6L1152.9 696.4Q1148 692 1144.3 686.9Z" fill="#f00012" stroke="#500" stroke-width="0.6"/><path d="M1164.4 691.6Q1166 689 1170.4 689.6L1174.4 694.6Q1172 697.6 1168.6 697.4Q1163 697.4 1164.4 691.6Z" fill="#fff"/><path d="M1162.4 697Q1166.6 698.6 1169.6 697.6Q1172.6 696.4 1174.6 694.6" stroke="#222" stroke-width="0.7" fill="none"/><g clip-path="url(#tc2)"><rect x="1143.5" y="710.5" width="39" height="20" fill="#aaa" stroke="#777" stroke-width="1"/><rect x="1152.9" y="711" width="21.5" height="17" fill="url(#chk)"/><path d="M1155.6 717.6L1158.8 711.4H1163.4L1165.8 717.8L1165 721.4L1157.4 722Q1154 721 1155.6 717.6Z" fill="#12a8e4"/><path d="M1158 721.4H1166.4L1167.6 728H1157.2Z" fill="#cdb070"/></g></svg>
<div class="a" style="left:1187px;top:669px;font-size:14px;line-height:17px;color:#333;-webkit-text-stroke-width:0">Layer #3</div>
<div class="a" style="left:1187px;top:690px;font-size:12px;line-height:15px;color:#999;-webkit-text-stroke-width:0.1px;word-spacing:1.5px">normal 100% | <b>Platicus</b></div>
<div class="a" style="left:1187px;top:713px;font-size:14px;line-height:17px;color:#333;-webkit-text-stroke-width:0">Layer #2</div>
<svg style="left:1083px;top:657px" width="21" height="21" viewBox="0 0 21 21"><path d="M14.6 0.8Q17 0.4 19.4 1.6Q20.6 3 20.2 6Q19 13 13 17.6Q7.6 21 3 20.6Q0.8 20.2 0.4 18.4Q0.2 16 2 15Q4.6 13.6 6.4 14.4L7.6 15.8Q11.4 14 13.6 9.8L12.6 8.6Q12 6.6 12.8 3.4Q13.4 1.2 14.6 0.8Z" fill="#fff"/></svg>
<svg style="left:1084px;top:700px" width="21" height="19" viewBox="0 0 21 19"><ellipse cx="11.6" cy="7.4" rx="9" ry="6.6" fill="#fff"/><path d="M4.8 11.6L0.6 18.4L9.4 13.6Z" fill="#fff"/></svg>
<div id="task" class="a"></div>
<svg style="left:16px;top:740px" width="17" height="16" viewBox="0 0 17 16"><path d="M0 2.2L7 1.2V7.4H0Z M8 1L17 0V7.4H8Z M0 8.4H7V14.8L0 13.8Z M8 8.4H17V16L8 14.9Z" fill="#fff"/></svg>
<div class="a" style="left:48px;top:728px;width:288px;height:40px;background:#f0f0f0"></div>
<svg style="left:60px;top:739px" width="17" height="18" viewBox="0 0 17 18"><circle cx="10.2" cy="6.8" r="5.6" stroke="#222" stroke-width="1.3" fill="none"/><path d="M6.2 10.8L0.8 16.8" stroke="#222" stroke-width="1.5"/></svg>
<div class="a" style="left:88px;top:740px;font-size:14.5px;line-height:18px;color:#1e1e1e;-webkit-text-stroke-width:0">Type here to search</div>
<svg style="left:0;top:0" width="1366" height="768" viewBox="0 0 1366 768"><path d="M277 734.6Q290 744 300 752Q312 760 336 763.4V768H318Q304 764 294 756Q284 746 276 737Z" fill="#a8987a"/><path d="M284 742Q292 740 298 742M300 752Q306 748 312 749" stroke="#a8987a" stroke-width="1.6" fill="none"/><g fill="#dcc44e"><ellipse cx="273.8" cy="736.6" rx="4" ry="3"/><ellipse cx="277.6" cy="747.4" rx="6" ry="4.6"/><ellipse cx="290.2" cy="756" rx="6.6" ry="4.8"/><ellipse cx="288.6" cy="735.6" rx="3.4" ry="4.4"/><ellipse cx="301" cy="742.6" rx="4.6" ry="6"/><ellipse cx="315" cy="748.6" rx="5.6" ry="8.6"/></g><g fill="#e6d68a"><circle cx="296" cy="732.6" r="1.4"/><circle cx="324.8" cy="736.4" r="1.6"/><circle cx="328.4" cy="748.6" r="2.6"/><circle cx="275" cy="756" r="1.2"/><circle cx="277.6" cy="761" r="1.8"/></g></svg>
<svg style="left:351px;top:740px" width="18" height="15" viewBox="0 0 18 15"><path d="M0.5 0.5H12.5M0.5 14.5H12.5M2.5 3.5H10.5V11.5H2.5Z" stroke="#fff" stroke-width="1.1" fill="none"/><rect x="14" y="3" width="3" height="2.6" fill="#fff"/><path d="M15.5 7V14.5M15.5 0V2" stroke="#fff" stroke-width="1.1"/></svg>
<svg style="left:0;top:0" width="1366" height="768" viewBox="0 0 1366 768"><defs><linearGradient id="eg1" x1="0" y1="0.3" x2="1" y2="0.6"><stop offset="0" stop-color="#1e7ad6"/><stop offset="0.45" stop-color="#2aa6e0"/><stop offset="0.8" stop-color="#52cf78"/><stop offset="1" stop-color="#6ad860"/></linearGradient></defs><circle cx="410.6" cy="747.6" r="12.2" fill="url(#eg1)"/><path d="M398.6 749Q399.4 741.2 407 741.8Q403.4 744.2 403.8 749.6Q404.4 755.8 411.6 757Q416.6 757.6 420.8 753.4Q419.6 758.8 413.4 759.8Q407 760.6 402.4 756.6Q398.4 753.4 398.6 749Z" fill="#1660b8"/><path d="M406.8 748.6Q407 745.4 410.4 745.4Q413.6 745.6 413.6 748.4Q416.6 751.6 422.4 751.6Q421.6 752.8 420.6 753.4Q415 755.4 411 753.2Q406.6 751.6 406.8 748.6Z" fill="#1a1a1a"/></svg>
<div class="a" style="left:391px;top:766px;width:40px;height:2px;background:#7cb6e6"></div>
<svg style="left:448px;top:738px" width="23" height="19" viewBox="0 0 23 19"><path d="M0 1.4Q0 0 1.4 0H8L10 2H21.6Q23 2 23 3.4V17.6Q23 19 21.6 19H1.4Q0 19 0 17.6Z" fill="#e2a82e"/><path d="M0 4.4H23V17.6Q23 19 21.6 19H1.4Q0 19 0 17.6Z" fill="#f8d36e"/><path d="M5.4 17.6V12Q5.4 10 7.4 10H15.6Q17.6 10 17.6 12V17.6H14.6V13H8.4V17.6Z" fill="#3f8fdc"/></svg>
<div class="a" style="left:485px;top:728px;width:48px;height:40px;background:#484848"></div>
<div class="a" style="left:485px;top:766px;width:48px;height:2px;background:#7cb6e6"></div>
<svg style="left:0;top:0" width="1366" height="768" viewBox="0 0 1366 768"><path d="M508.6 748.0L498.38 742.10A11.8 11.8 0 0 1 518.82 742.10Z" fill="#ea4335"/><path d="M508.6 748.0L518.82 742.10A11.8 11.8 0 0 1 508.60 759.80Z" fill="#fbbc04"/><path d="M508.6 748.0L508.60 759.80A11.8 11.8 0 0 1 498.38 742.10Z" fill="#34a853"/><circle cx="508.6" cy="748.0" r="5.6" fill="#fff"/><circle cx="508.6" cy="748.0" r="4.4" fill="#4285f4"/><circle cx="515" cy="754" r="7.2" fill="#0a0c28"/><path d="M509 751L512 748.6L515 750.4L518 748.6L521 751L520 755H510Z" fill="#1a2a6a"/><path d="M510.4 754.4L513 751.6L514.6 753.4M519.6 754.4L517 751.6L515.4 753.4" stroke="#48c8f0" stroke-width="1.1" fill="none"/><path d="M509 758.2Q515 756 521 758.2" stroke="#d8d8e8" stroke-width="0.9" fill="none"/><rect x="510" y="759" width="10" height="2.4" fill="#000"/></svg>
<svg style="left:1139px;top:745px" width="13" height="7" viewBox="0 0 13 7"><path d="M0.6 6.4L6.5 0.8L12.4 6.4" stroke="#fff" stroke-width="1.1" fill="none"/></svg>
<svg style="left:1170px;top:745px" width="16" height="8" viewBox="0 0 16 8"><rect x="0.5" y="0.5" width="13" height="7" stroke="#fff" stroke-width="1" fill="none"/><rect x="2" y="2" width="4" height="4" fill="#fff"/><rect x="14" y="2.5" width="1.6" height="3" fill="#fff"/></svg>
<svg style="left:1203px;top:742px" width="14" height="14" viewBox="0 0 14 14"><path d="M1 12Q1 1 12 1M3.6 12Q3.6 3.6 12 3.6M6.2 12Q6.2 6.2 12 6.2M8.8 12Q8.8 8.8 12 8.8" stroke="#fff" stroke-width="1" fill="none"/><circle cx="11.6" cy="11.8" r="1.3" fill="#fff"/></svg>
<svg style="left:1232px;top:742px" width="18" height="14" viewBox="0 0 18 14"><path d="M0.6 4.6H3.6L7.6 1V13L3.6 9.4H0.6Z" stroke="#fff" stroke-width="1" fill="none"/><path d="M10 4.6Q11.4 7 10 9.4" stroke="#fff" stroke-width="1" fill="none"/><path d="M12.4 2.6Q15 7 12.4 11.4" stroke="#ccc" stroke-width="1" fill="none"/><path d="M14.8 0.6Q18.4 7 14.8 13.4" stroke="#999" stroke-width="1" fill="none"/></svg>
<svg style="left:1269px;top:740px" width="17" height="17" viewBox="0 0 17 17"><path d="M5 15L13 3Q14 1.4 15.2 2.2Q16.2 3 15.4 4.4L7.6 15.6L5 16.4Z" stroke="#fff" stroke-width="1.1" fill="none"/><path d="M4 10Q0 11 1 14.6Q2 16 4.6 15" stroke="#fff" stroke-width="1.1" fill="none"/><path d="M13.6 9Q16.4 9.6 14.4 11.6" stroke="#fff" stroke-width="1.1" fill="none"/></svg>
<div class="a" style="left:1297px;top:732px;width:64px;font-size:12px;line-height:14px;color:#fff;text-align:center;-webkit-text-stroke-width:0">5:31 PM</div>
<div class="a" style="left:1297px;top:750px;width:64px;font-size:12px;line-height:14px;color:#fff;text-align:center;-webkit-text-stroke-width:0">4/28/2023</div>
<div class="a" style="left:1361px;top:728px;width:1px;height:40px;background:#555"></div>
</body></html>
